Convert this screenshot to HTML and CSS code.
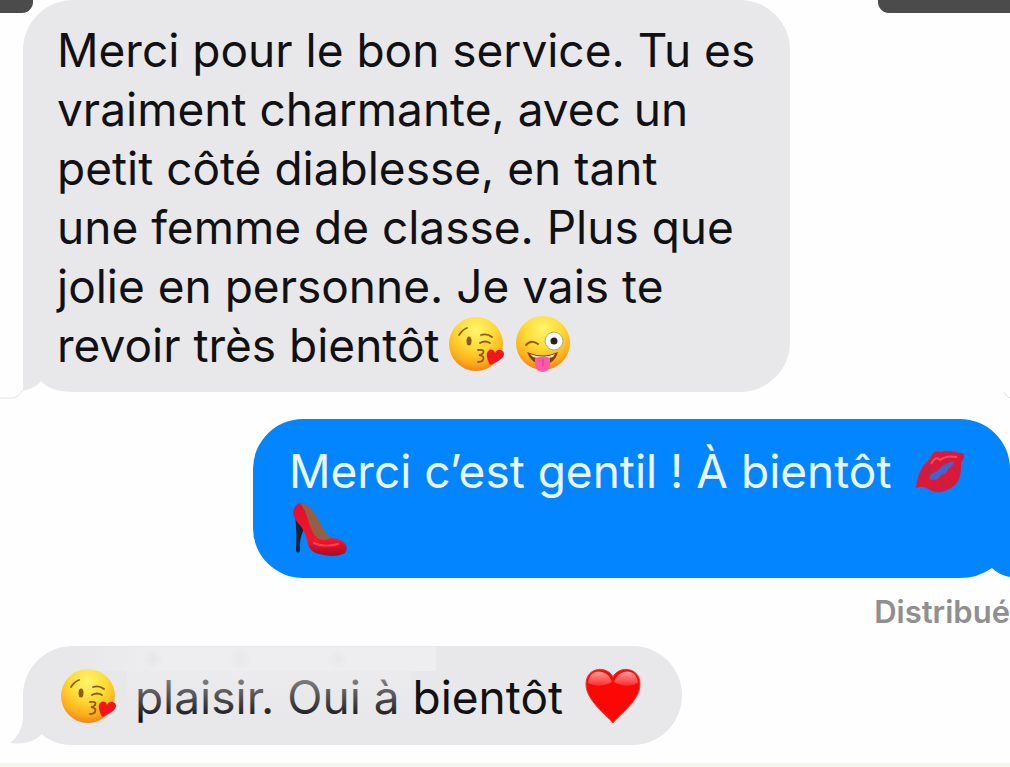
FILE: index.html
```html
<!DOCTYPE html>
<html lang="fr">
<head>
<meta charset="utf-8">
<title>Messages</title>
<link rel="stylesheet" href="styles.css">
</head>
<body>
<svg class="defs" aria-hidden="true">
  <defs>
    <radialGradient id="face" cx="50%" cy="24%" r="76%">
      <stop offset="0" stop-color="#fff56e"/><stop offset=".45" stop-color="#ffdb35"/><stop offset=".8" stop-color="#fdae1c"/><stop offset="1" stop-color="#f18414"/>
    </radialGradient>
    <linearGradient id="shine" x1="0" y1="0" x2="0" y2="1"><stop offset="0" stop-color="#ff9a9a"/><stop offset="1" stop-color="#ff2a2a"/></linearGradient>
    <linearGradient id="shoe" x1="0" y1="0" x2="0" y2="1"><stop offset="0" stop-color="#e2102a"/><stop offset=".7" stop-color="#f5142c"/><stop offset="1" stop-color="#a80c22"/></linearGradient>
    <symbol id="kiss" viewBox="0 0 56 56">
      <circle cx="27" cy="28" r="27" fill="url(#face)"/>
      <g fill="none" stroke="#8c5a14" stroke-width="1.8" stroke-linecap="round">
        <path d="M10 19Q13 14 18 12M32 19Q38 17 43 21M31 27Q36 24 41 27"/>
        <path d="M29 34Q36 33 34 37Q33 39 30 39Q36 40 34 44Q33 46 29 46"/>
      </g>
      <ellipse cx="20" cy="25" rx="2.5" ry="4.5" fill="#8c5a14"/>
      <path d="M41 49Q37 41 38 37Q40 32 44 34Q46 36 46 37Q48 33 52 34Q57 36 54 41Q51 45 41 49Z" fill="#f4141e"/>
    </symbol>
    <symbol id="tongue" viewBox="0 0 56 56">
      <circle cx="27" cy="27" r="27" fill="url(#face)"/>
      <path d="M10 29Q15 23 22 28" fill="none" stroke="#8c5a14" stroke-width="2" stroke-linecap="round"/>
      <circle cx="38" cy="25" r="9" fill="#fff" stroke="#b9a67a"/>
      <circle cx="38" cy="25" r="3.5" fill="#222"/>
      <path d="M11 36Q27 43 42 36Q39 48 27 49Q15 48 11 36Z" fill="#80400c"/>
      <path d="M14 38Q27 43 39 38L37 41Q27 44 17 41Z" fill="#f3e6cf"/>
      <path d="M19 42Q27 39 34 42L34 49Q33 56 27 56Q20 56 19 49Z" fill="#fb5ba4"/>
      <path d="M27 43V50" stroke="#d93a86" stroke-width="1"/>
    </symbol>
    <symbol id="heart" viewBox="0 0 56 56">
      <path d="M28 55C22 47 1 33 1 16C1 -1 22 -3 28 9C34 -3 55 -1 55 16C55 33 34 47 28 55Z" fill="#fd0606" stroke="#e83a3a"/>
      <path d="M3 15C4 0 22 0 27 14Q14 21 3 15ZM29 14C34 0 52 0 53 15Q42 21 29 14Z" fill="url(#shine)"/>
    </symbol>
    <symbol id="lips" viewBox="0 0 56 56">
      <path d="M3 46Q5 26 17 17Q20 7 28 10Q34 7 51 12Q51 18 48 21Q49 40 38 46Q25 54 15 47Q9 43 3 46Z" fill="#df1737"/>
      <path d="M16 37Q17 31 24 29Q31 21 42 19Q39 25 35 27Q34 32 28 33Q24 40 16 37Z" fill="#3c67cf"/>
      <g fill="none" stroke="#98305f" stroke-width="1.2"><path d="M9 37L17 25M14 34L20 18M25 24L24 15M33 20L37 14M20 47L23 41M29 48L30 38M39 43L36 33M46 33L41 26"/></g>
      <path d="M18 22Q23 13 27 18Q33 13 44 15" fill="none" stroke="#f04c67" stroke-width="2"/>
    </symbol>
    <symbol id="heel" viewBox="0 0 56 56">
      <path d="M4 15Q6 28 5 50Q7 53 9 50Q8 38 13 28Z" fill="#17233c"/>
      <path d="M9 2Q17 2 25 14Q33 31 40 38Q30 42 24 35Q19 28 10 13Z" fill="#936044"/>
      <path d="M9 2Q3 4 2 12Q4 20 9 24Q14 30 17 43Q19 51 28 53Q43 57 52 53Q57 50 55 44Q52 38 40 37Q31 42 24 35C17 25 18 14 9 2Z" fill="url(#shoe)"/>
      <path d="M23 42Q33 47 47 43" fill="none" stroke="#ff4450" stroke-width="2" stroke-linecap="round"/>
    </symbol>
  </defs>
</svg>
<div class="tab tab-left"></div>
<div class="tab tab-right"></div>
<main class="thread">
  <article class="bubble received first">
    <p>Merci pour le bon service. Tu es<br>vraiment charmante, avec un<br>petit côté diablesse, en tant<br>une femme de classe. Plus que<br>jolie en personne. Je vais te<br>revoir très bientôt<svg class="emoji spaced" role="img" aria-label="Bisou"><use href="#kiss"/></svg><svg class="emoji spaced" role="img" aria-label="Clin d’œil"><use href="#tongue"/></svg></p>
    <svg class="notch" viewBox="0 0 60 24" aria-hidden="true">
      <path d="M0 24V21Q13 18 18 11Q28 22 50 22H60V24Z" fill="#fefefe"/>
    </svg>
    <svg class="corner" viewBox="0 0 24 16" aria-hidden="true"><path d="M0 11H12Q18 11 23 3" fill="none" stroke="#e4e4e4"/></svg>
  </article>
  <svg class="edge" viewBox="0 0 8 8" aria-hidden="true"><path d="M2 0Q4 4 8 6" fill="none" stroke="#dedede"/></svg>
  <article class="bubble sent">
    <p>Merci c’est gentil ! À bientôt <svg class="emoji spaced" role="img" aria-label="Lèvres"><use href="#lips"/></svg><br><svg class="emoji" role="img" aria-label="Escarpin"><use href="#heel"/></svg></p>
    <svg class="sent-notch" viewBox="0 0 50 12" aria-hidden="true"><path d="M0 11Q18 11 32 1Q39 8 50 10V12H0Z" fill="#fefefe"/></svg>
  </article>
  <div class="status">Distribué</div>
  <article class="bubble received last">
    <p><svg class="emoji lead" role="img" aria-label="Bisou"><use href="#kiss"/></svg> plaisir. Oui à bientôt <svg class="emoji spaced" role="img" aria-label="Cœur"><use href="#heart"/></svg></p>
    <svg class="tail" viewBox="0 0 60 50" aria-hidden="true"><path d="M13 0V20Q13 38 0 48Q20 51 32 39Q42 49 60 50L30 25L14 0Z" fill="#e8e8ea"/></svg>
    <div class="haze"></div>
    <div class="fade"></div>
  </article>
</main>
<footer class="strip"></footer>
</body>
</html>
```

FILE: styles.css
```css
* { box-sizing: border-box; }
body {
  margin: 0;
  min-height: 100vh;
  display: flex;
  flex-direction: column;
  overflow: hidden;
  background: #fefefe;
  font-family: Inter, "Liberation Sans", sans-serif;
  color: #111113;
}
.defs { position: absolute; width: 0; height: 0; }
.tab { position: absolute; top: 0; height: 13px; background: #4b4b4b; }
.tab-left { left: 0; width: 33px; border-radius: 0 0 11px 0; }
.tab-right { right: 0; width: 132px; border-radius: 0 0 0 11px; }
.thread { position: relative; flex: 1; display: flex; flex-direction: column; align-items: flex-start; }
.bubble {
  position: relative;
  border-radius: 50px;
  font-size: 46px;
  line-height: 59px;
  white-space: nowrap;
}
.bubble p { margin: 0; }
.received { margin-left: 23px; padding: 21px 34px 17px; background: #e8e8ea; }
.first { width: 767px; border-bottom-left-radius: 0; }
.sent {
  align-self: flex-end;
  width: 757px;
  margin-top: 27px;
  padding: 23px 36px 18px;
  border-bottom-right-radius: 0;
  background: #0285ff;
  color: #e9f6ff;
}
.status {
  align-self: flex-end;
  margin-top: 16px;
  font-size: 31px;
  line-height: 36px;
  font-weight: 600;
  color: #8f8f91;
}
.last { width: 659px; margin-top: 16px; padding: 22px 36px 18px; }
.emoji { width: 56px; height: 56px; margin: 0 2px; vertical-align: -10px; }
.spaced { margin-left: 9px; }
.lead { margin-right: 5px; }
.notch { position: absolute; left: 0; bottom: -2px; width: 60px; height: 24px; }
.corner { position: absolute; left: -23px; bottom: -11px; width: 24px; height: 16px; }
.edge { position: absolute; top: 392px; right: 0; width: 8px; height: 8px; }
.sent-notch { position: absolute; right: 0; bottom: -1px; width: 50px; height: 12px; }
.tail { position: absolute; left: -13px; bottom: 0; width: 60px; height: 50px; }
.haze {
  position: absolute;
  top: 1px;
  left: 50px;
  width: 363px;
  height: 24px;
  background:
    radial-gradient(circle at 22% 50%, rgba(222, 222, 226, .5), transparent 10px),
    radial-gradient(circle at 46% 50%, rgba(222, 222, 226, .4), transparent 12px),
    radial-gradient(circle at 73% 50%, rgba(222, 222, 226, .4), transparent 10px),
    linear-gradient(90deg, rgba(240, 240, 242, 0), #eeeef0 25%, #eeeef0);
}
.fade {
  position: absolute;
  top: 25px;
  left: 104px;
  width: 284px;
  height: 50px;
  background: linear-gradient(rgba(238, 238, 240, .6), rgba(236, 236, 238, .3) 50%, rgba(232, 232, 234, 0));
}
.strip { height: 4px; background: #f5f6ee; }
```
